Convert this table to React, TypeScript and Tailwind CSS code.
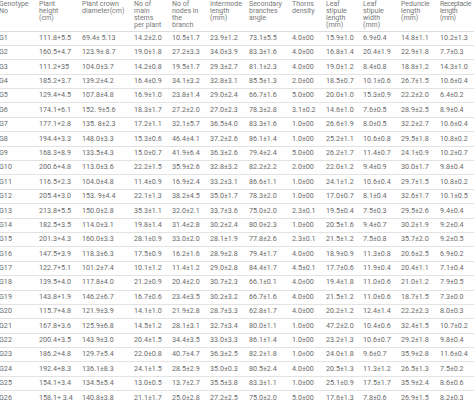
import React from "react";

const widths = ["w-[40px]", "w-[43px]", "w-[52px]", "w-[38px]", "w-[38px]", "w-[39px]", "w-[43px]", "w-[34px]", "w-[37px]", "w-[38px]", "w-[39px]", "w-[60px]"];

const headers: string[][] = [
  ["Genotype", "No"],
  ["Plant", "height", "(cm)"],
  ["Plant crown", "diameter(cm)"],
  ["No of", "main", "stems", "per plant"],
  ["No of", "nodes in", "the", "branch"],
  ["Intermode", "length", "(mm)"],
  ["Secondary", "branches", "angle"],
  ["Thorns", "density"],
  ["Leaf", "stipule", "length", "(mm)"],
  ["Leaf", "stipule", "width", "(mm)"],
  ["Peduncle", "length", "(mm)"],
  ["Receptacle", "length", "(mm)"],
];

const rows: string[][] = [
  ["G1","111.8+5.5","69.4± 5.13","14.2±2.0","10.5±1.7","23.9±1.2","73.1±5.5","4.0±00","15.9±1.0","6.9±0.4","14.8±1.1","10.2±1.3"],
  ["G2","160.5+4.7","123.9± 8.7","19.0±1.8","27.2±3.3","34.0±3.9","83.3±1.6","4.0±00","16.8±1.4","20.4±1.9","22.9±1.8","7.7±0.3"],
  ["G3","111.2+35","104.0±3.7","14.2±0.8","19.5±1.7","29.3±2.7","81.1±2.3","4.0±00","19.0±1.2","8.4±0.8","18.8±1.2","14.3±1.0"],
  ["G4","185.2+3.7","139.2±4.2","16.4±0.9","34.1±3.2","32.8±3.1","85.5±1.3","2.0±00","18.5±0.7","10.1±0.6","26.7±1.5","10.6±0.4"],
  ["G5","129.4+4.5","107.8±4.8","16.9±1.0","23.8±1.4","29.0±2.4","66.7±1.6","5.0±00","20.0±1.0","15.3±0.9","22.2±2.0","6.4±0.2"],
  ["G6","174.1+6.1","152. 9±5.6","18.3±1.7","27.2±2.0","27.0±2.3","78.3±2.8","3.1±0.2","14.6±1.0","7.6±0.5","28.9±2.5","8.9±0.4"],
  ["G7","177.1+2.8","135. 8±2.3","17.2±1.1","32.1±5.7","36.5±4.0","83.3±1.6","1.0±00","26.6±1.9","8.0±0.5","32.2±2.7","10.6±0.4"],
  ["G8","194.4+3.3","148.0±3.3","15.3±0.6","46.4±4.1","37.2±2.6","86.1±1.4","1.0±00","25.2±1.1","10.6±0.8","29.5±1.8","10.8±0.2"],
  ["G9","168.3+8.9","133.5±4.3","15.0±0.7","41.9±6.4","36.3±2.6","79.4±2.4","5.0±00","26.2±1.7","11.4±0.7","24.1±0.9","10.2±0.7"],
  ["G10","200.6+4.8","113.0±3.6","22.2±1.5","35.9±2.6","32.8±3.2","82.2±2.2","2.0±00","22.0±1.2","9.4±0.9","30.0±1.7","9.8±0.4"],
  ["G11","116.5+2.3","104.0±4.8","11.4±0.9","16.9±2.4","33.2±3.1","86.6±1.1","1.0±00","24.1±1.2","10.6±0.4","29.7±1.5","10.8±0.2"],
  ["G12","205.4+3.0","153. 9±4.4","22.1±1.3","38.2±4.5","35.0±1.7","78.3±2.0","1.0±00","17.0±0.7","8.1±0.4","32.6±1.7","10.1±0.5"],
  ["G13","213.8+5.5","150.0±2.8","35.3±1.1","32.0±2.1","33.7±3.6","75.0±2.0","2.3±0.1","19.5±0.4","7.5±0.3","29.5±2.6","9.4±0.4"],
  ["G14","182.5+3.5","114.0±3.1","19.8±1.4","31.4±2.8","30.2±2.4","80.0±2.3","1.0±00","20.5±1.6","9.4±0.7","30.2±1.9","9.2±0.4"],
  ["G15","201.3+4.3","160.0±3.3","28.1±0.9","33.0±2.0","28.1±1.9","77.8±2.6","2.3±0.1","21.5±1.2","7.5±0.8","35.7±2.0","9.2±0.5"],
  ["G16","147.5+3.9","118.3±6.3","17.5±0.9","16.2±1.6","28.9±2.8","79.4±1.7","4.0±00","18.9±0.9","11.3±0.8","20.6±2.5","6.9±0.2"],
  ["G17","122.7+5.1","101.2±7.4","10.1±1.2","11.4±1.2","29.0±2.8","84.4±1.7","4.5±0.1","17.7±0.6","11.9±0.4","20.4±1.1","7.1±0.4"],
  ["G18","139.5+4.0","117.8±4.0","21.2±0.9","20.4±2.0","30.7±2.3","66.1±0.1","4.0±00","19.4±1.8","11.0±0.6","21.0±1.2","7.9±0.5"],
  ["G19","143.8+1.9","146.2±6.7","16.7±0.6","23.4±3.5","30.2±3.2","66.7±1.6","4.0±00","21.5±1.2","11.0±0.6","18.7±1.5","7.3±0.0"],
  ["G20","115.7+4.8","121.9±3.9","14.1±1.0","21.9±2.8","28.7±3.3","62.8±1.7","4.0±00","20.2±1.2","12.4±1.4","22.2±2.3","8.0±0.3"],
  ["G21","167.8+3.6","125.9±6.8","14.5±1.2","28.1±3.1","32.7±3.4","80.0±1.1","1.0±00","47.2±2.0","10.4±0.6","32.4±1.5","10.7±0.2"],
  ["G22","200.4+3.5","143.9±3.0","20.4±1.5","34.4±3.5","33.0±3.3","86.1±1.4","1.0±00","23.2±1.3","10.6±0.7","29.2±1.8","9.8±0.4"],
  ["G23","186.2+4.8","129.7±5.4","22.0±0.8","40.7±4.7","36.3±2.5","82.2±1.8","1.0±00","24.0±1.8","9.6±0.7","35.9±2.8","11.6±0.4"],
  ["G24","192.4+8.3","136.1±8.3","24.1±1.5","28.5±2.9","35.0±0.3","80.5±2.4","4.0±00","20.5±1.3","11.3±1.2","26.5±1.3","7.5±0.2"],
  ["G25","154.1+3.4","134.5±5.4","13.0±0.5","13.7±2.7","35.5±3.8","83.3±1.1","1.0±00","25.1±0.9","17.5±1.7","35.9±2.4","8.6±0.6"],
  ["G26","158.1+ 3.4","140.8±3.8","21.1±1.7","25.0±2.8","27.2±2.5","75.0±2.0","5.0±00","17.6±1.3","7.8±0.6","26.9±1.5","8.2±0.3"],
];

export default function App() {
  return (
    <div className="w-[474px] h-[403px] overflow-hidden bg-white text-[#6a6a6a] [font-family:Roboto,'Liberation_Sans',sans-serif]">
      <div className="ml-[-1px] w-[520px]">
        <div className="flex h-[31.5px] border-b border-[#dcdcdc] pt-[0.5px] text-[7px] leading-[7px] text-[#7a7a7a]">
          {headers.map((h, i) => (
            <div key={i} className={`${widths[i]} shrink-0 whitespace-nowrap ${i === 11 ? "tracking-[-0.35px]" : ""}`}>
              {h.map((l, j) => (
                <div key={j}>{l}</div>
              ))}
            </div>
          ))}
        </div>
        {rows.map((r, ri) => (
          <div key={ri} className="flex h-[14.4px] items-center border-b border-[#e3e3e3] text-[7.15px]">
            {r.map((c, ci) => (
              <div key={ci} className={`${widths[ci]} shrink-0 whitespace-pre`}>
                {c}
              </div>
            ))}
          </div>
        ))}
      </div>
    </div>
  );
}
